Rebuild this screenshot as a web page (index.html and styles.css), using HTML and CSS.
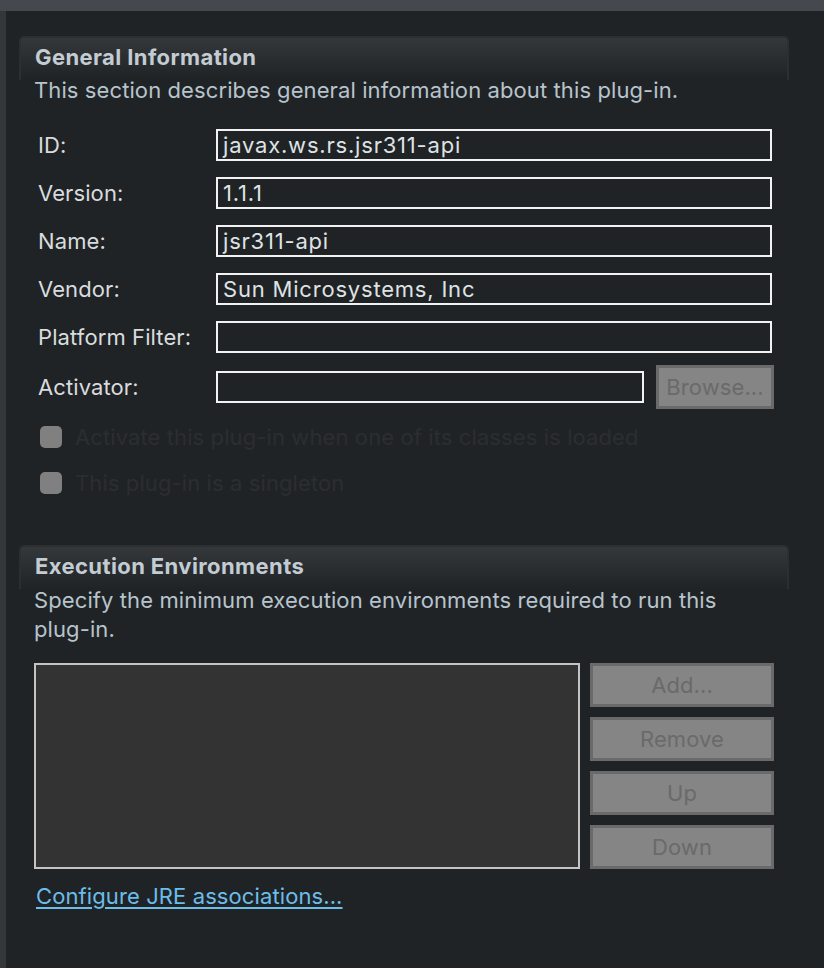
FILE: index.html
```html
<!DOCTYPE html>
<html>
<head>
<meta charset="utf-8">
<link rel="stylesheet" href="styles.css">
</head>
<body>
<div class="topbar"></div>
<div class="main">
  <div class="side"></div>
  <div class="content">
    <section class="section general">
      <div class="sec-head">
        <h2 class="sec-title">General Information</h2>
      </div>
      <p class="sec-desc">This section describes general information about this plug-in.</p>
      <div class="form">
        <div class="row">
          <span class="label">ID:</span>
          <div class="field">javax.ws.rs.jsr311-api</div>
        </div>
        <div class="row">
          <span class="label">Version:</span>
          <div class="field">1.1.1</div>
        </div>
        <div class="row">
          <span class="label">Name:</span>
          <div class="field">jsr311-api</div>
        </div>
        <div class="row">
          <span class="label">Vendor:</span>
          <div class="field">Sun Microsystems, Inc</div>
        </div>
        <div class="row">
          <span class="label">Platform Filter:</span>
          <div class="field"></div>
        </div>
        <div class="row activator">
          <span class="label">Activator:</span>
          <div class="field short"></div>
          <div class="btn browse">Browse...</div>
        </div>
      </div>
      <div class="checks">
        <div class="check"><span class="box"></span><span class="check-text">Activate this plug-in when one of its classes is loaded</span></div>
        <div class="check"><span class="box"></span><span class="check-text">This plug-in is a singleton</span></div>
      </div>
    </section>
    <section class="section exec">
      <div class="sec-head">
        <h2 class="sec-title">Execution Environments</h2>
      </div>
      <p class="sec-desc">Specify the minimum execution environments required to run this plug-in.</p>
      <div class="env">
        <div class="list"></div>
        <div class="btns">
          <div class="btn">Add...</div>
          <div class="btn">Remove</div>
          <div class="btn">Up</div>
          <div class="btn">Down</div>
        </div>
      </div>
      <a class="link" href="#">Configure JRE associations...</a>
    </section>
  </div>
</div>
</body>
</html>
```
FILE: styles.css
```css
html, body {
  margin: 0;
  padding: 0;
  background: #202325;
  height: 968px;
  overflow: hidden;
}
body {
  font-family: Inter, "Open Sans", "Liberation Sans", sans-serif;
  font-size: 22px;
  letter-spacing: 0.1px;
  color: #d6dadd;
}
.topbar {
  height: 11px;
  background: #45494d;
}
.main {
  display: flex;
  height: 957px;
}
.side {
  width: 6px;
  background: #33373a;
  flex: none;
}
.content {
  flex: 1;
  padding: 25px 35px 0 13px;
}
.section {
  display: flex;
  flex-direction: column;
}
.sec-head {
  height: 44px;
  border: 2px solid #2b2f32;
  border-bottom: none;
  border-radius: 5px 5px 0 0;
  background: linear-gradient(#34383b, #202325);
  padding: 0 0 0 14px;
  box-sizing: border-box;
}
.sec-title {
  margin: 0;
  font-size: 22px;
  font-weight: 700;
  letter-spacing: 0.4px;
  color: #c3ccd3;
  line-height: 38px;
}
.sec-desc {
  margin: -4px 0 0 0;
  padding: 0 50px 0 15px;
  color: #b7c4cd;
  line-height: 29px;
}
.exec .sec-desc {
  margin-top: -3px;
}
.form {
  display: flex;
  flex-direction: column;
  gap: 16px;
  margin-top: 24px;
  padding-left: 19px;
}
.row {
  display: flex;
  align-items: center;
  height: 32px;
}
.label {
  width: 178px;
  flex: none;
  color: #d9dcde;
}
.field {
  width: 556px;
  height: 32px;
  box-sizing: border-box;
  border: 2px solid #f2f2f2;
  padding: 0 5px;
  line-height: 28px;
  letter-spacing: 0.8px;
  color: #dfe2e4;
}
.field.short {
  width: 428px;
}
.activator {
  height: 44px;
  margin-top: -4px;
  margin-bottom: -6px;
}
.btn {
  box-sizing: border-box;
  height: 44px;
  background: #858585;
  border: 3px solid #6a6a6a;
  color: #6a6a6a;
  display: flex;
  align-items: center;
  justify-content: center;
}
.browse {
  width: 118px;
  margin-left: 12px;
}
.checks {
  display: flex;
  flex-direction: column;
  gap: 24px;
  margin-top: 23px;
  padding-left: 21px;
}
.check {
  display: flex;
  align-items: center;
  height: 22px;
}
.box {
  width: 22px;
  height: 22px;
  border-radius: 5px;
  background: #808080;
  margin-right: 13px;
  flex: none;
}
.check-text {
  color: #2b2e30;
}
.exec {
  margin-top: 51px;
}
.env {
  display: flex;
  gap: 10px;
  margin-top: 19px;
  padding-left: 15px;
}
.list {
  width: 546px;
  height: 206px;
  box-sizing: border-box;
  background: #333333;
  border: 2px solid #c4c4c4;
}
.btns {
  display: flex;
  flex-direction: column;
  gap: 10px;
}
.btns .btn {
  width: 184px;
}
.link {
  margin: 14px 0 0 17px;
  color: #6bbdea;
  text-decoration: underline;
  text-underline-offset: 3px;
  align-self: flex-start;
}
```
